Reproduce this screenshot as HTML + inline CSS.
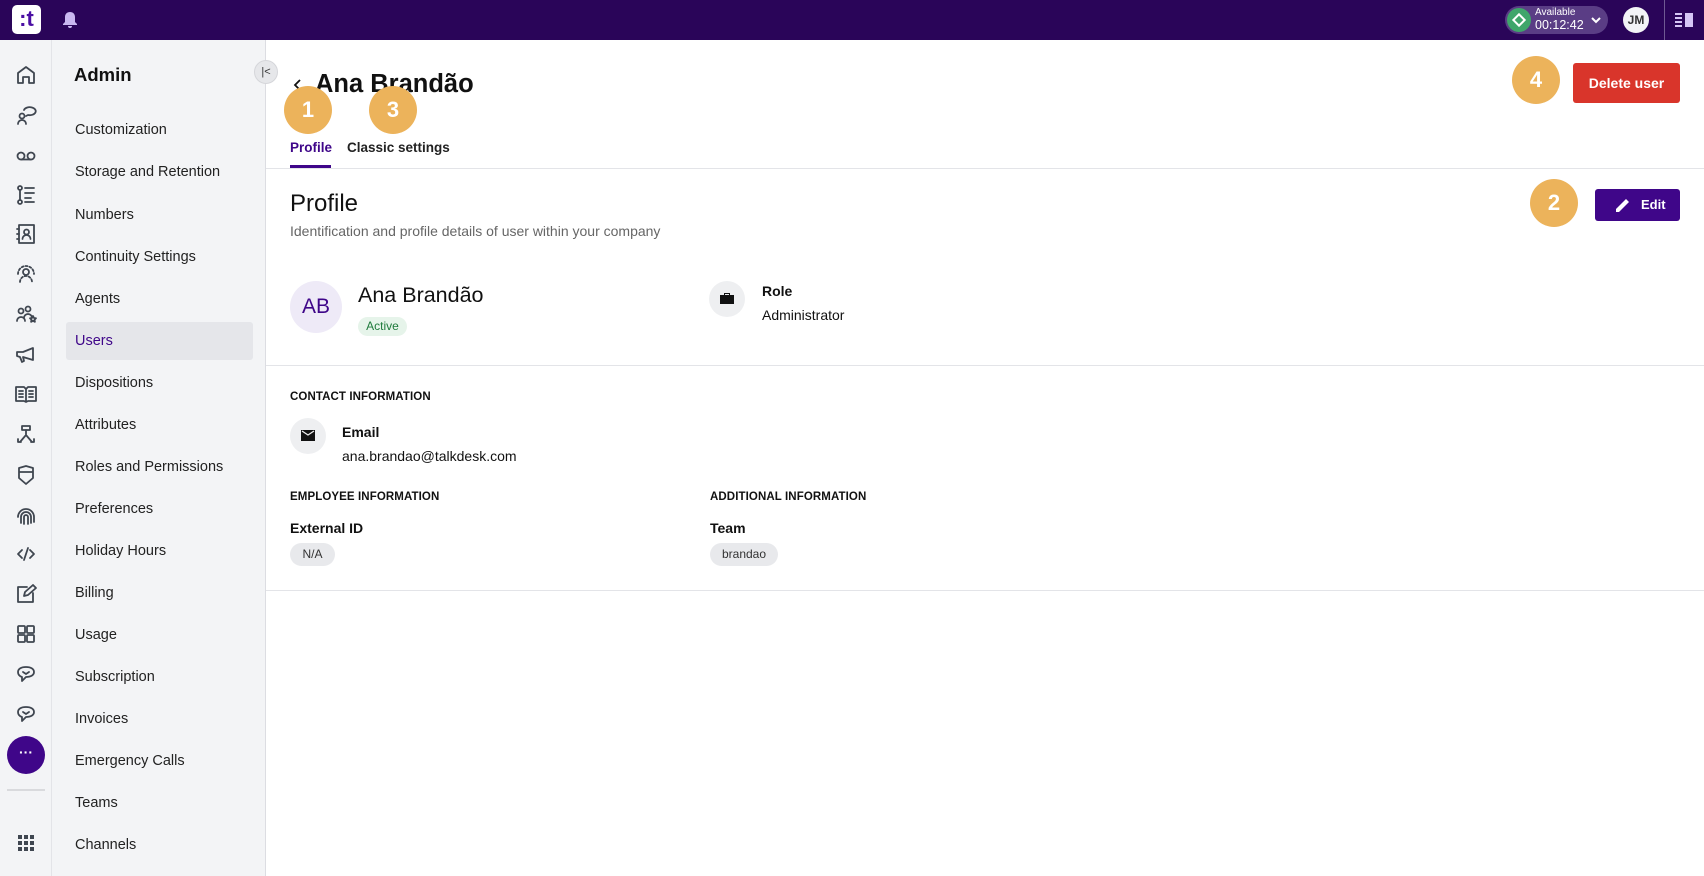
<!DOCTYPE html>
<html><head><meta charset="utf-8"><style>
*{box-sizing:border-box;margin:0;padding:0}
body{width:1704px;height:876px;overflow:hidden;font-family:"Liberation Sans",Arial,sans-serif;background:#fff;color:#111;position:relative}
.a{position:absolute}
.top{left:0;top:0;width:1704px;height:40px;background:#2a0559}
.rail{left:0;top:40px;width:52px;height:836px;background:#f3f4f6;border-right:1px solid #e3e4e8}
.nav{left:52px;top:40px;width:214px;height:836px;background:#f3f4f6;border-right:1px solid #dcdde2}
.item{position:absolute;left:23px;font-size:14.5px;color:#222;line-height:20px}
.ic{position:absolute;left:14px;width:24px;height:24px}
.ic svg{width:24px;height:24px;fill:none;stroke:#3f4650;stroke-width:1.8;stroke-linecap:round;stroke-linejoin:round}
.badge{position:absolute;width:48px;height:48px;border-radius:50%;background:#ecb35b;color:#fff;font-weight:bold;font-size:22px;text-align:center;line-height:48px}
.hdr{font-size:11.5px;font-weight:bold;color:#111;letter-spacing:.1px}
.lbl{font-size:14px;font-weight:bold}
.val{font-size:14px}
.pill{height:23px;border-radius:12px;background:#e8e9ec;font-size:12px;color:#333;line-height:23px;text-align:center}
.circ{border-radius:50%;background:#eeeff1}
.line{height:1px;background:#e3e4e8}
</style></head><body>
<div class="a top"></div>
<div class="a" style="left:12px;top:5px;width:29px;height:29px;background:#fff;border-radius:5px;color:#4b0fa3;font-weight:bold;font-size:22px;text-align:center;line-height:28px">:t</div>
<svg class="a" style="left:62px;top:11px" width="16" height="18" viewBox="0 0 16 18"><path d="M8 1c-3 0-5 2-5 5v5l-2 2v1h14v-1l-2-2V6c0-3-2-5-5-5zM6 15a2 2 0 0 0 4 0z" fill="#c9b8f0"/></svg>
<div class="a" style="left:1505px;top:6px;width:103px;height:28px;border-radius:14px;background:#5a3d85"></div>
<div class="a" style="left:1507px;top:8px;width:24px;height:24px;border-radius:50%;background:#3fa66b"></div>
<div class="a" style="left:1514px;top:15px;width:10px;height:10px;border:2px solid #fff;transform:rotate(45deg)"></div>
<div class="a" style="left:1535px;top:7px;font-size:10px;color:#fff;line-height:11px">Available</div>
<div class="a" style="left:1535px;top:18px;font-size:12.5px;color:#fff;line-height:14px">00:12:42</div>
<svg class="a" style="left:1590px;top:15px" width="12" height="10"><path d="M2 3l4 4 4-4" stroke="#fff" stroke-width="2" fill="none"/></svg>
<div class="a" style="left:1623px;top:7px;width:26px;height:26px;border-radius:50%;background:#f3f4f6;font-size:12px;text-align:center;line-height:26px;color:#333;font-weight:bold">JM</div>
<div class="a" style="left:1664px;top:0;width:1px;height:40px;background:#6f5a93"></div>
<svg class="a" style="left:1675px;top:12px" width="20" height="16"><g fill="#d5c6f5"><rect x="0" y="1" width="7" height="2"/><rect x="0" y="5" width="7" height="2"/><rect x="0" y="9" width="7" height="2"/><rect x="0" y="13" width="7" height="2"/><rect x="10" y="1" width="8" height="14"/></g></svg>

<div class="a rail">
<div class="ic" style="top:23px"><svg viewBox="0 0 24 24"><path d="M4 10l8-6 8 6v10h-5v-6h-6v6H4z"/></svg></div>
<div class="ic" style="top:63px"><svg viewBox="0 0 24 24"><circle cx="8" cy="13" r="2.5"/><path d="M4 21a4 4 0 0 1 8 0M10 7a6 4 0 1 1 4 5l-2 1"/></svg></div>
<div class="ic" style="top:103px"><svg viewBox="0 0 24 24"><circle cx="7" cy="13" r="3.5"/><circle cx="17" cy="13" r="3.5"/><path d="M7 16.5h10"/></svg></div>
<div class="ic" style="top:143px"><svg viewBox="0 0 24 24"><circle cx="6" cy="5" r="2"/><circle cx="6" cy="19" r="2"/><path d="M6 7v10M11 5h9M11 10h9M11 15h6M11 19h9"/></svg></div>
<div class="ic" style="top:182px"><svg viewBox="0 0 24 24"><rect x="5" y="3" width="15" height="18"/><circle cx="12.5" cy="10" r="2.5"/><path d="M8.5 17a4 4 0 0 1 8 0M3 7h2M3 12h2M3 17h2"/></svg></div>
<div class="ic" style="top:222px"><svg viewBox="0 0 24 24"><circle cx="12" cy="10" r="3"/><path d="M6 20a6 6 0 0 1 12 0M4 12a8 8 0 0 1 16 0" stroke-dasharray="2 2"/></svg></div>
<div class="ic" style="top:262px"><svg viewBox="0 0 24 24"><circle cx="7" cy="9" r="2.5"/><circle cx="14" cy="7" r="2.5"/><path d="M3 19a4 4 0 0 1 8 0M10 16a4 4 0 0 1 8 0M19 14l1 2 2 .3-1.5 1.5.4 2-1.9-1-1.9 1 .4-2L16 16.3l2-.3z"/></svg></div>
<div class="ic" style="top:302px"><svg viewBox="0 0 24 24"><path d="M3 10v4l3 1 2 5 2-1-1-4 10 3V6L9 10H3zM19 9v6"/></svg></div>
<div class="ic" style="top:342px"><svg viewBox="0 0 24 24"><path d="M2 5h8l2 2 2-2h8v14h-8l-2 1-2-1H2zM12 7v13M5 9h4M5 12h4M5 15h4M15 9h4M15 12h4M15 15h4"/></svg></div>
<div class="ic" style="top:383px"><svg viewBox="0 0 24 24"><rect x="8" y="3" width="8" height="4"/><path d="M12 7v5M12 12l-6 7M12 12l6 7M4 16v3h3M20 16v3h-3"/></svg></div>
<div class="ic" style="top:423px"><svg viewBox="0 0 24 24"><path d="M5 5l7-2 7 2v10l-7 6-7-6zM5 9h14"/></svg></div>
<div class="ic" style="top:463px"><svg viewBox="0 0 24 24"><path d="M4 14a8 8 0 0 1 16 0v5M7 20v-6a5 5 0 0 1 10 0v6M10 21v-7a2 2 0 0 1 4 0v7"/></svg></div>
<div class="ic" style="top:502px"><svg viewBox="0 0 24 24"><path d="M8 8l-4 4 4 4M16 8l4 4-4 4M14 6l-4 12"/></svg></div>
<div class="ic" style="top:542px"><svg viewBox="0 0 24 24"><path d="M13 5H4v15h15v-9M10 14l1-4 8-7 3 3-8 7z"/></svg></div>
<div class="ic" style="top:582px"><svg viewBox="0 0 24 24"><rect x="4" y="4" width="7" height="7" rx="1"/><rect x="13" y="4" width="7" height="7" rx="1"/><rect x="4" y="13" width="7" height="7" rx="1"/><rect x="13" y="13" width="7" height="7" rx="1"/></svg></div>
<div class="ic" style="top:622px"><svg viewBox="0 0 24 24"><path d="M12 5c5 0 8 2 8 5s-3 5-8 5l-4 4v-4c-3-1-4-3-4-5 0-3 3-5 8-5zM9 10l3 2 3-2"/></svg></div>
<div class="ic" style="top:662px"><svg viewBox="0 0 24 24"><path d="M12 5c5 0 8 2 8 5s-3 5-8 5l-4 4v-4c-3-1-4-3-4-5 0-3 3-5 8-5zM9 10l3 2 3-2"/></svg></div>
<div class="a" style="left:7px;top:696px;width:38px;height:38px;border-radius:50%;background:#3f0689;color:#fff;text-align:center;line-height:32px;font-size:14px;font-weight:bold">···</div>
<div class="a" style="left:7px;top:749px;width:38px;height:2px;background:#d9dadd"></div>
<svg class="a" style="left:18px;top:795px" width="16" height="16"><g fill="#3f4650"><rect x="0" y="0" width="4" height="4"/><rect x="6" y="0" width="4" height="4"/><rect x="12" y="0" width="4" height="4"/><rect x="0" y="6" width="4" height="4"/><rect x="6" y="6" width="4" height="4"/><rect x="12" y="6" width="4" height="4"/><rect x="0" y="12" width="4" height="4"/><rect x="6" y="12" width="4" height="4"/><rect x="12" y="12" width="4" height="4"/></g></svg>
</div>

<div class="a nav">
<div class="a" style="left:22px;top:24px;font-size:18.5px;font-weight:bold;color:#111">Admin</div>
<div class="a" style="left:14px;top:282px;width:187px;height:38px;background:#e5e6ea;border-radius:3px"></div>
<div class="item" style="top:80px">Customization</div>
<div class="item" style="top:122px">Storage and Retention</div>
<div class="item" style="top:165px">Numbers</div>
<div class="item" style="top:207px">Continuity Settings</div>
<div class="item" style="top:249px">Agents</div>
<div class="item" style="top:291px;color:#3f0689">Users</div>
<div class="item" style="top:333px">Dispositions</div>
<div class="item" style="top:375px">Attributes</div>
<div class="item" style="top:417px">Roles and Permissions</div>
<div class="item" style="top:459px">Preferences</div>
<div class="item" style="top:501px">Holiday Hours</div>
<div class="item" style="top:543px">Billing</div>
<div class="item" style="top:585px">Usage</div>
<div class="item" style="top:627px">Subscription</div>
<div class="item" style="top:669px">Invoices</div>
<div class="item" style="top:711px">Emergency Calls</div>
<div class="item" style="top:753px">Teams</div>
<div class="item" style="top:795px">Channels</div>
</div>
<div class="a" style="left:254px;top:60px;width:24px;height:24px;border-radius:50%;background:#e6e7ea;border:1px solid #d5d6da;font-size:11px;text-align:center;line-height:22px;color:#333">|&lt;</div>

<svg class="a" style="left:292px;top:78px" width="12" height="14"><path d="M8 2L3 7l5 5" stroke="#111" stroke-width="1.8" fill="none"/></svg>
<div class="a" style="left:315px;top:68px;font-size:25.5px;font-weight:bold;line-height:32px;color:#111">Ana Brandão</div>
<div class="a" style="left:290px;top:140px;font-size:13.5px;font-weight:bold;color:#3f0689">Profile</div>
<div class="a" style="left:347px;top:140px;font-size:13.5px;font-weight:bold;color:#222">Classic settings</div>
<div class="a" style="left:290px;top:165px;width:41px;height:3px;background:#3f0689"></div>
<div class="a line" style="left:266px;top:168px;width:1438px"></div>

<div class="a" style="left:1573px;top:63px;width:107px;height:40px;border-radius:3px;background:#d9352b;color:#fff;font-weight:bold;font-size:14px;text-align:center;line-height:40px">Delete user</div>

<div class="a" style="left:290px;top:190px;font-size:24px;line-height:28px">Profile</div>
<div class="a" style="left:290px;top:223px;font-size:14px;color:#666">Identification and profile details of user within your company</div>
<div class="a" style="left:1595px;top:189px;width:85px;height:32px;border-radius:3px;background:#3f0689;color:#fff;font-weight:bold;font-size:13px;line-height:32px"><svg style="position:absolute;left:20px;top:8px" width="16" height="16" viewBox="0 0 16 16"><path d="M1 15v-3L11 2l3 3L4 15zM10 3l3 3" fill="#fff"/></svg><span style="position:absolute;left:46px">Edit</span></div>

<div class="a" style="left:290px;top:281px;width:52px;height:52px;border-radius:50%;background:#eeeaf7;color:#3f0689;font-size:21px;text-align:center;line-height:52px">AB</div>
<div class="a" style="left:358px;top:282px;font-size:21.5px;line-height:26px">Ana Brandão</div>
<div class="a" style="left:358px;top:317px;width:49px;height:19px;border-radius:10px;background:#e6f4ea;color:#1e7a3b;font-size:12px;text-align:center;line-height:19px">Active</div>
<div class="a circ" style="left:709px;top:281px;width:36px;height:36px"></div>
<svg class="a" style="left:720px;top:292px" width="14" height="13"><path d="M4 3V1h6v2h4v9H0V3z M5 2v1h4V2z" fill="#111" fill-rule="evenodd"/></svg>
<div class="a lbl" style="left:762px;top:283px">Role</div>
<div class="a val" style="left:762px;top:307px">Administrator</div>
<div class="a line" style="left:266px;top:365px;width:1438px"></div>

<div class="a hdr" style="left:290px;top:391px">CONTACT INFORMATION</div>
<div class="a circ" style="left:290px;top:418px;width:36px;height:36px"></div>
<svg class="a" style="left:301px;top:430px" width="14" height="11"><path d="M0 0h14v11H0z" fill="#111"/><path d="M1 1l6 4 6-4" stroke="#eee" stroke-width="1.3" fill="none"/></svg>
<div class="a lbl" style="left:342px;top:424px">Email</div>
<div class="a val" style="left:342px;top:448px">ana.brandao@talkdesk.com</div>
<div class="a hdr" style="left:290px;top:491px">EMPLOYEE INFORMATION</div>
<div class="a hdr" style="left:710px;top:491px">ADDITIONAL INFORMATION</div>
<div class="a lbl" style="left:290px;top:520px">External ID</div>
<div class="a lbl" style="left:710px;top:520px">Team</div>
<div class="a pill" style="left:290px;top:543px;width:45px">N/A</div>
<div class="a pill" style="left:710px;top:543px;width:68px">brandao</div>
<div class="a line" style="left:266px;top:590px;width:1438px"></div>

<div class="badge" style="left:284px;top:86px">1</div>
<div class="badge" style="left:369px;top:86px">3</div>
<div class="badge" style="left:1512px;top:56px">4</div>
<div class="badge" style="left:1530px;top:179px">2</div>
</body></html>
